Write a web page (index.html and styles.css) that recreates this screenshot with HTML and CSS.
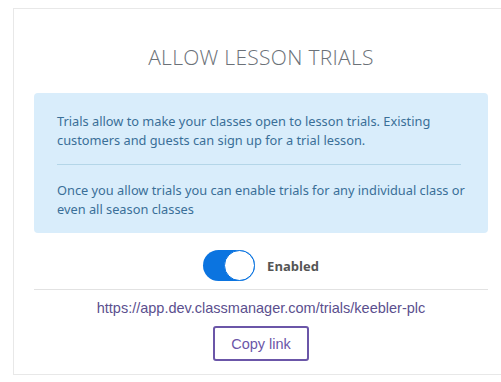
FILE: index.html
```html
<!DOCTYPE html>
<html lang="en">
<head>
    <meta charset="UTF-8">
    <meta name="viewport" content="width=device-width, initial-scale=1.0">
    <title>Allow Lesson Trials</title>
    <link rel="stylesheet" href="styles.css">
</head>
<body>
    <div class="card">
        <h2 class="title">ALLOW LESSON TRIALS</h2>
        <div class="info">
            <p>Trials allow to make your classes open to lesson trials. Existing customers and guests can sign up for a trial lesson.</p>
            <hr>
            <p>Once you allow trials you can enable trials for any individual class or even all season classes</p>
        </div>
        <div class="toggle-row">
            <label class="switch">
                <input type="checkbox" checked>
                <span class="slider"></span>
            </label>
            <span class="toggle-label">Enabled</span>
        </div>
        <div class="link-area">
            <div class="link">https://app.dev.classmanager.com/trials/keebler-plc</div>
            <button type="button" class="copy-btn">Copy link</button>
        </div>
    </div>
</body>
</html>
```

FILE: styles.css
```css
body {
    margin: 0;
    padding: 0;
    overflow: hidden;
    font-family: "Open Sans", Arial, sans-serif;
    background-color: #fff;
}
.card {
    margin: 8px 0 0 13px;
    width: 454px;
    padding: 0 20px 13px 20px;
    border: 1px solid #e8e8e8;
}
.title {
    margin: 0;
    padding: 34px 0 22px 0;
    text-align: center;
    font-size: 21px;
    font-weight: 300;
    color: #6b7178;
    letter-spacing: 0.3px;
}
.info {
    background-color: #d9edfb;
    border-radius: 4px;
    padding: 19px 16px 14px 23px;
    color: #3a6f98;
    font-family: "Noto Sans", sans-serif;
    font-size: 12.8px;
    line-height: 19px;
}
.info p {
    margin: 0;
}
.info hr {
    border: none;
    border-top: 1px solid #b4d6e8;
    margin: 14px 11px 16px 0;
}
.toggle-row {
    display: flex;
    justify-content: center;
    align-items: center;
    gap: 12px;
    padding: 17px 0 8px 0;
    border-bottom: 1px solid #e2e2e2;
}
.switch {
    position: relative;
    display: inline-block;
    width: 52px;
    height: 31px;
}
.switch input {
    display: none;
}
.slider {
    position: absolute;
    inset: 0;
    background-color: #0b74e0;
    border-radius: 16px;
}
.slider::before {
    content: "";
    position: absolute;
    right: 0;
    top: 0;
    width: 29px;
    height: 29px;
    border-radius: 50%;
    background-color: #fff;
    border: 1px solid #0b74e0;
}
.toggle-label {
    font-family: "Open Sans", sans-serif;
    font-weight: bold;
    font-size: 13px;
    color: #555;
}
.link-area {
    display: flex;
    flex-direction: column;
    align-items: center;
    padding-top: 10px;
}
.link {
    font-family: "Liberation Sans", Arial, sans-serif;
    font-size: 14.5px;
    color: #5b4f8e;
    line-height: 17px;
}
.copy-btn {
    margin-top: 9px;
    width: 96px;
    height: 35px;
    background-color: #fff;
    border: 2px solid #6b56a8;
    border-radius: 3px;
    color: #6b56a8;
    font-family: "Liberation Sans", Arial, sans-serif;
    font-size: 14.5px;
    cursor: pointer;
}
```
